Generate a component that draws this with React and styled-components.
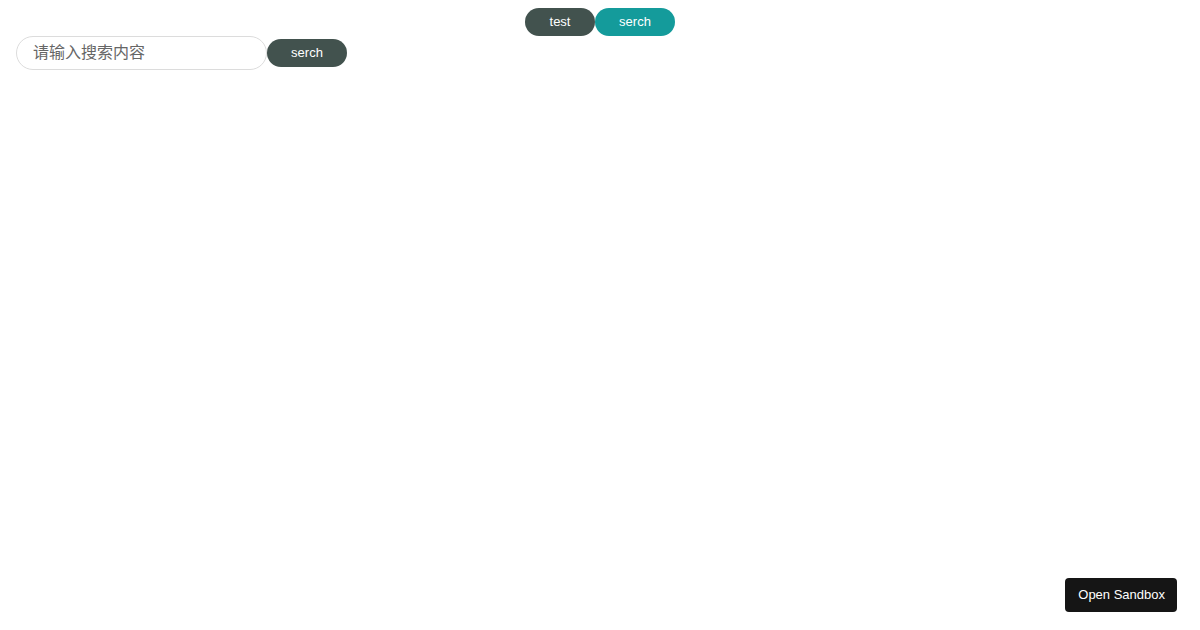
import React, { useState } from "react";
import styled, { createGlobalStyle } from "styled-components";

const GlobalStyle = createGlobalStyle`
  body {
    margin: 8px;
    background: #ffffff;
    font-family: "Liberation Sans", Arial, "Noto Sans CJK SC", sans-serif;
  }
`;

const TopBar = styled.div`
  display: flex;
  justify-content: center;
`;

const PillButton = styled.button`
  border: none;
  border-radius: 14px;
  padding: 6px 0;
  width: ${props => props.width || 80}px;
  font-family: "Liberation Sans", Arial, sans-serif;
  font-size: 13px;
  line-height: 16px;
  color: #ffffff;
  background: ${props => (props.accent ? "#149b9b" : "#42524e")};
  cursor: pointer;
`;

const SearchRow = styled.div`
  display: flex;
  align-items: center;
  padding-left: 8px;
`;

const SearchInput = styled.input`
  box-sizing: border-box;
  width: 251px;
  height: 34px;
  border: 1px solid #dcdcdc;
  border-radius: 17px;
  padding: 0 16px;
  font-family: "Liberation Sans", "Noto Sans CJK SC", sans-serif;
  font-size: 16px;
  color: #333;
  outline: none;

  &::placeholder {
    color: #666;
  }
`;

const SandboxLink = styled.a`
  position: fixed;
  right: 23px;
  bottom: 18px;
  padding: 9px 12px 9px 13px;
  border-radius: 4px;
  background: #151515;
  color: #ffffff;
  font-family: "Liberation Sans", Arial, sans-serif;
  font-size: 13px;
  line-height: 16px;
  text-decoration: none;
`;

export default function App() {
  const [query, setQuery] = useState("");

  return (
    <>
      <GlobalStyle />
      <TopBar>
        <PillButton width={70}>test</PillButton>
        <PillButton accent width={80}>serch</PillButton>
      </TopBar>
      <SearchRow>
        <SearchInput
          value={query}
          onChange={e => setQuery(e.target.value)}
          placeholder="请输入搜索内容"
        />
        <PillButton width={80}>serch</PillButton>
      </SearchRow>
      <SandboxLink href="#">Open Sandbox</SandboxLink>
    </>
  );
}
